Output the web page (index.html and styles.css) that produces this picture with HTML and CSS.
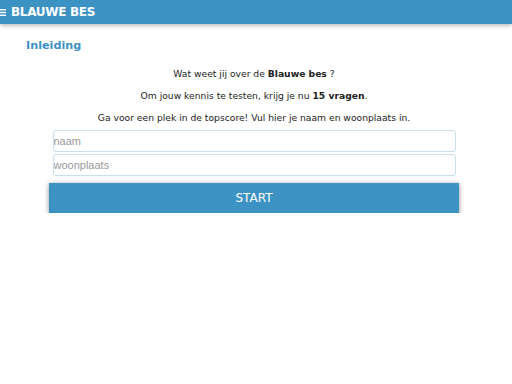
FILE: index.html
```html
<!DOCTYPE html>
<html lang="nl">
<head>
  <meta charset="UTF-8">
  <title>Blauwe bes</title>
  <link rel="stylesheet" href="styles.css">
</head>
<body>

<header class="topbar">
  <svg class="menu-icon" width="6" height="7" viewBox="0 0 6 7">
    <rect x="0" y="0" width="6" height="1.4" fill="#fff"/>
    <rect x="0" y="2.8" width="6" height="1.4" fill="#fff"/>
    <rect x="0" y="5.6" width="6" height="1.4" fill="#fff"/>
  </svg>
  <span class="title">BLAUWE BES</span>
</header>

<main class="content">
  <h2 class="section-title">Inleiding</h2>

  <div class="intro">
    <p>Wat weet jij over de <b>Blauwe bes</b> ?</p>
    <p>Om jouw kennis te testen, krijg je nu <b>15 vragen</b>.</p>
    <p>Ga voor een plek in de topscore! Vul hier je naam en woonplaats in.</p>
  </div>

  <form class="player-form">
    <input type="text" class="field" placeholder="naam">
    <input type="text" class="field" placeholder="woonplaats">
    <button type="button" class="start-button">START</button>
  </form>
</main>

</body>
</html>
```

FILE: styles.css
```css
* {
  box-sizing: border-box;
}
body {
  margin: 0;
  font-family: 'DejaVu Sans', Verdana, sans-serif;
  background: #fff;
  color: #222;
}
.topbar {
  height: 24px;
  background: #3d92c4;
  color: white;
  display: flex;
  align-items: center;
  gap: 5px;
  box-shadow: 0 2px 4px rgba(0,0,0,0.25);
}
.menu-icon {
  display: block;
  margin-top: 1px;
}
.title {
  font-size: 12px;
  font-weight: bold;
  letter-spacing: -0.3px;
}
.content {
  padding: 0 26px;
}
.section-title {
  margin: 15px 0 0;
  font-size: 11.2px;
  font-weight: bold;
  color: #3d92c4;
}
.intro {
  text-align: center;
  font-size: 9.2px;
  padding-top: 16px;
  margin-right: 4px;
}
.intro p {
  margin: 0 0 11px;
  line-height: 11px;
}
.intro p:last-child {
  margin-bottom: 0;
}
.player-form {
  display: flex;
  flex-direction: column;
  align-items: center;
  padding-top: 7px;
  margin-right: 4px;
}
.field {
  width: 403px;
  height: 22px;
  margin-bottom: 2px;
  border: 1px solid #c9e0ec;
  border-radius: 3px;
  padding: 0;
  font-family: 'Liberation Sans', Arial, sans-serif;
  font-size: 11px;
  outline: none;
}
.field::placeholder {
  color: #999;
}
.start-button {
  width: 410px;
  height: 30px;
  margin-top: 5px;
  border: none;
  background: #3d92c4;
  color: white;
  font-family: 'DejaVu Sans', Verdana, sans-serif;
  font-size: 12px;
  box-shadow: 0 1px 5px rgba(0,0,0,0.45);
}
```
